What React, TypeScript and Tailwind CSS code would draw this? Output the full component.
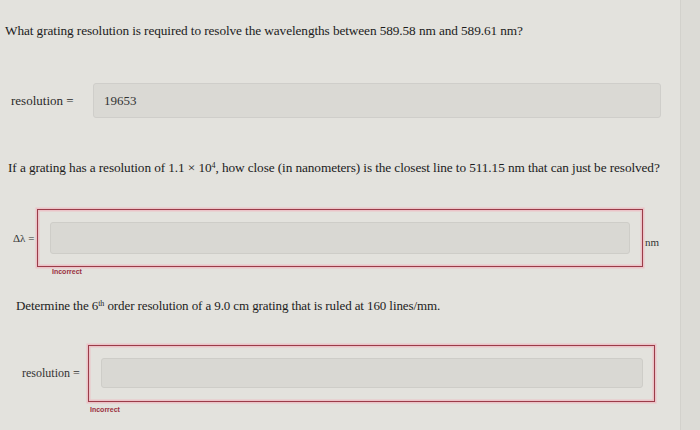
export default function App() {
  const serif = { fontFamily: '"Liberation Serif", "Times New Roman", serif' };
  const sans = { fontFamily: '"Liberation Sans", Arial, sans-serif' };
  return (
    <div className="w-[700px] h-[430px] overflow-hidden bg-[#e3e2dd] flex text-[#1c1c1c]" style={serif}>
      <div className="w-[680px] flex flex-col pl-[5px]">
        {/* Q1 */}
        <p className="mt-[23px] text-[13.3px] leading-4 tracking-[-0.1px]">
          What grating resolution is required to resolve the wavelengths between 589.58 nm and 589.61 nm?
        </p>
        <div className="mt-[44px] flex items-center">
          <span className="ml-[6px] w-[82px] shrink-0 whitespace-nowrap text-[13px] text-[#2a2a2a]">resolution =</span>
          <div className="w-[568px] h-[35px] rounded-[3px] bg-[#dad9d4] border border-[#cfceca] flex items-center pl-[10px] text-[13px] text-[#333]">
            19653
          </div>
        </div>

        {/* Q2 */}
        <p className="mt-[42px] ml-[3px] text-[13.3px] leading-4 tracking-[-0.1px]">
          If a grating has a resolution of 1.1 × 10<sup className="text-[8px]">4</sup>, how close (in nanometers) is
          the closest line to 511.15 nm that can just be resolved?
        </p>
        <div className="mt-[33px] flex items-center">
          <span className="ml-[8px] w-[24px] shrink-0 whitespace-nowrap text-[11px] text-[#333]">Δλ =</span>
          <div className="w-[606px] h-[58px] border border-[#9b3c48] shadow-[0_0_0_1.5px_#ebc3c8,inset_0_0_0_1.5px_#ebc3c8] flex items-center px-[12px]">
            <div className="w-full h-[32px] rounded-[3px] bg-[#d9d8d3] border border-[#cecdc8]" />
          </div>
          <span className="ml-[2px] mt-[8px] text-[11px] text-[#333]">nm</span>
        </div>
        <span className="ml-[47px] text-[7px] font-bold text-[#9a3040]" style={sans}>
          Incorrect
        </span>

        {/* Q3 */}
        <p className="mt-[20px] ml-[11px] text-[13px] leading-4 tracking-[-0.1px]">
          Determine the 6<sup className="text-[8px]">th</sup> order resolution of a 9.0 cm grating that is ruled at 160 lines/mm.
        </p>
        <div className="mt-[31px] flex items-center">
          <span className="ml-[17px] w-[66px] shrink-0 whitespace-nowrap text-[12px] text-[#333]">resolution =</span>
          <div className="w-[567px] h-[57px] border border-[#9b3c48] shadow-[0_0_0_1.5px_#ebc3c8,inset_0_0_0_1.5px_#ebc3c8] flex items-center pl-[12px] pr-[11px]">
            <div className="w-full h-[30px] rounded-[3px] bg-[#d9d8d3] border border-[#cecdc8]" />
          </div>
        </div>
        <span className="ml-[85px] mt-[3px] text-[7px] font-bold text-[#9a3040]" style={sans}>
          Incorrect
        </span>
      </div>
      <div className="flex-1 bg-[#dcdbd6] border-l border-[#d2d1cc]" />
    </div>
  );
}
